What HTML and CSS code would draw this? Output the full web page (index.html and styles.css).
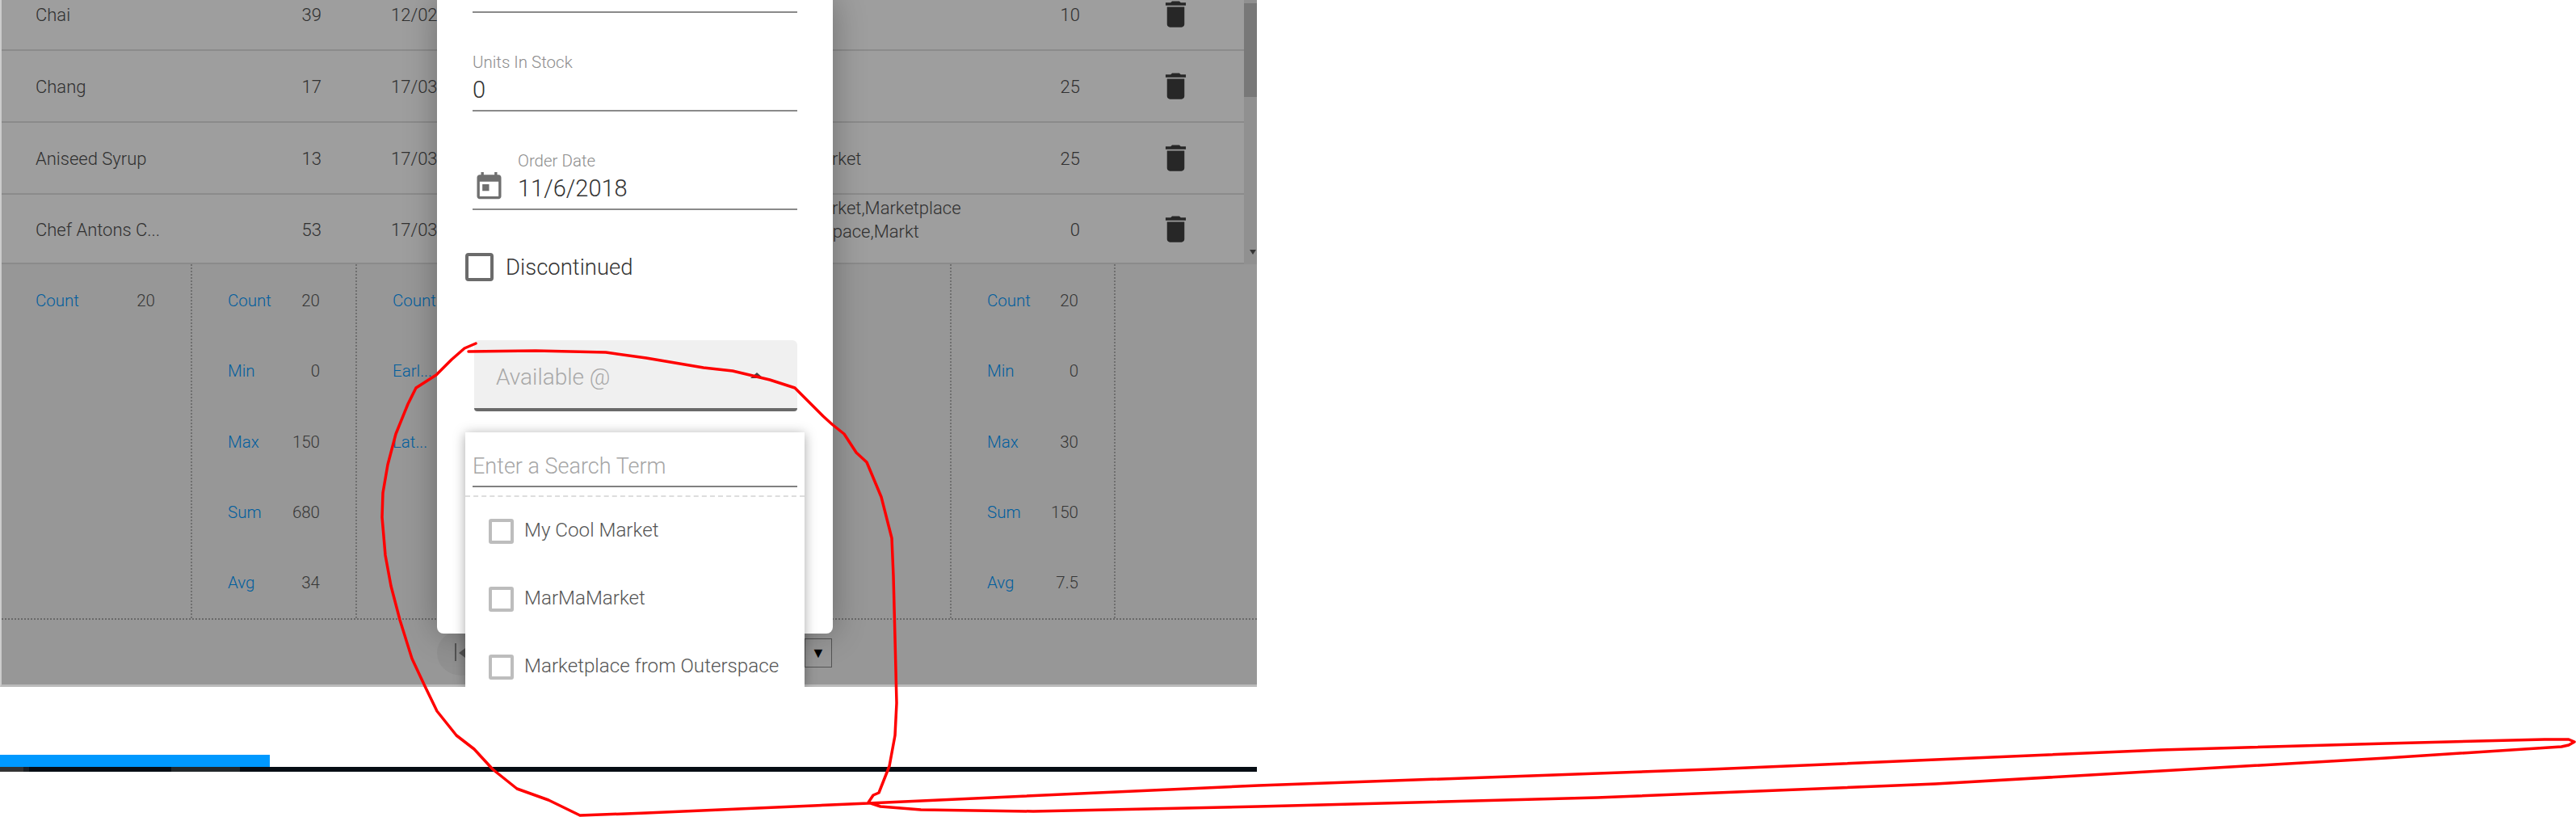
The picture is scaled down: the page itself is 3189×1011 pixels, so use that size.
FILE: index.html
```html
<!DOCTYPE html>
<html lang="en">
<head>
<meta charset="utf-8">
<title>Products</title>
<link rel="stylesheet" href="styles.css">
</head>
<body>
<div class="page">
  <section class="grid">
    <div class="rows">
      <div class="row"><span class="name">Chai</span><span class="num">39</span><span class="date">12/02/2018</span><span class="market"></span><span class="num">10</span><span class="del"><svg class="trash" viewBox="0 0 24 24"><path d="M6 19c0 1.1.9 2 2 2h8c1.1 0 2-.9 2-2V7H6v12zM19 4h-3.500l-1-1h-5l-1 1H5v2h14V4z"/></svg></span></div>
      <div class="row"><span class="name">Chang</span><span class="num">17</span><span class="date">17/03/2018</span><span class="market"></span><span class="num">25</span><span class="del"><svg class="trash" viewBox="0 0 24 24"><path d="M6 19c0 1.1.9 2 2 2h8c1.1 0 2-.9 2-2V7H6v12zM19 4h-3.500l-1-1h-5l-1 1H5v2h14V4z"/></svg></span></div>
      <div class="row"><span class="name">Aniseed Syrup</span><span class="num">13</span><span class="date">17/03/2018</span><span class="market">My Cool Market</span><span class="num">25</span><span class="del"><svg class="trash" viewBox="0 0 24 24"><path d="M6 19c0 1.1.9 2 2 2h8c1.1 0 2-.9 2-2V7H6v12zM19 4h-3.500l-1-1h-5l-1 1H5v2h14V4z"/></svg></span></div>
      <div class="row row-last"><span class="name">Chef Antons C...</span><span class="num">53</span><span class="date">17/03/2018</span><span class="market market-wrap">My Cool Market,Marketplace<br>from Outerspace,Markt</span><span class="num">0</span><span class="del"><svg class="trash" viewBox="0 0 24 24"><path d="M6 19c0 1.1.9 2 2 2h8c1.1 0 2-.9 2-2V7H6v12zM19 4h-3.500l-1-1h-5l-1 1H5v2h14V4z"/></svg></span></div>
    </div>
    <div class="totals">
      <div class="tcol tcol-name">
        <div class="stat"><a>Count</a><b>20</b></div>
      </div>
      <div class="tcol">
        <div class="stat"><a>Count</a><b>20</b></div>
        <div class="stat"><a>Min</a><b>0</b></div>
        <div class="stat"><a>Max</a><b>150</b></div>
        <div class="stat"><a>Sum</a><b>680</b></div>
        <div class="stat"><a>Avg</a><b>34</b></div>
      </div>
      <div class="tcol tcol-date">
        <div class="stat"><a>Count</a></div>
        <div class="stat"><a>Earl...</a></div>
        <div class="stat"><a>Lat...</a></div>
      </div>
      <div class="tcol">
        <div class="stat"><a>Count</a><b>20</b></div>
        <div class="stat"><a>Min</a><b>0</b></div>
        <div class="stat"><a>Max</a><b>30</b></div>
        <div class="stat"><a>Sum</a><b>150</b></div>
        <div class="stat"><a>Avg</a><b>7.5</b></div>
      </div>
      <div class="tcol tcol-end"></div>
    </div>
    <div class="pager">
      <button class="page-btn"><span class="first-bar"></span><span class="first-tri"></span></button>
      <span class="page-select">▼</span>
    </div>
    <div class="scrollbar"><div class="thumb"></div><span class="scroll-arrow"></span></div>
    <div class="backdrop"></div>
  </section>

  <div class="foot-bars">
    <div class="progress"></div>
    <div class="blackbar"><span class="seg seg-a"></span><span class="seg seg-b"></span><span class="seg seg-c"></span></div>
  </div>

  <form class="modal">
    <div class="field field-cut"></div>
    <div class="field">
      <label class="lbl">Units In Stock</label>
      <div class="val">0</div>
    </div>
    <div class="field field-date">
      <svg class="cal" viewBox="3 1 18 21"><path d="M19 3h-1V1h-2v2H8V1H6v2H5c-1.100 0-2 .9-2 2v14c0 1.100.9 2 2 2h14c1.100 0 2-.9 2-2V5c0-1.100-.9-2-2-2zm0 16H5V8h14v11zM7 10h5v5H7z"/></svg>
      <div class="date-body">
        <label class="lbl">Order Date</label>
        <div class="val">11/6/2018</div>
      </div>
    </div>
    <div class="check-row"><span class="check"></span><span class="check-text">Discontinued</span></div>
    <div class="select"><span class="select-text">Available @</span><span class="select-arrow"></span></div>
  </form>

  <div class="panel">
    <div class="search"><span class="search-text">Enter a Search Term</span></div>
    <div class="dash"></div>
    <div class="item"><span class="box"></span><span class="item-text">My Cool Market</span></div>
    <div class="item"><span class="box"></span><span class="item-text">MarMaMarket</span></div>
    <div class="item"><span class="box"></span><span class="item-text">Marketplace from Outerspace</span></div>
  </div>

  <svg class="scribble" viewBox="0 0 3189 1011" width="3189" height="1011">
    <path d="M589 425 L575 431 L559 445 L540 464 L515 480 L505 500 L490 537 L480 575 L474 610 L473 640 L477 687 L484 725 L495 767 L510 815 L525 847 L541 880 L565 910 L587 927 L610 952 L640 976 L679 990 L718 1009 L800 1006 L1075 994 L1558 972 L2117 952 L2675 928 L2954 920 L3150 915 L3180 915 L3187 918 L3180 922 L3171 924 L2954 938 L2396 970 L1977 987 L1558 998 L1279 1004 L1140 1002 L1090 998 L1075 993 L1081 984 L1088 981 L1101 948 L1108 910 L1110 870 L1108 790 L1106 713 L1104 666 L1091 615 L1073 572 L1060 560 L1045 537 L1030 525 L1019 515 L984 480 L953 470 L907 459 L871 455 L800 443 L750 436 L663 434 L580 435"/>
  </svg>
</div>
</body>
</html>
```
FILE: styles.css
```css
* { box-sizing: border-box; }
html, body { margin: 0; padding: 0; height: 1011px; overflow: hidden; background: #fff; }
body { font-family: Roboto, "Noto Sans", sans-serif; font-weight: 300; color: #333; }
.page { position: relative; width: 3189px; height: 1011px; overflow: hidden; }

.grid { position: relative; width: 1556px; height: 850px; overflow: hidden; background: #fff; border-left: 2px solid #ccc; border-bottom: 3px solid #bbb; }

.rows { margin-top: -26px; }
.row { display: grid; grid-template-columns: 236px 204px 433px 303px 203px 159px; height: 89px; padding-top: 2px; align-items: center; border-bottom: 2px solid #e0e0e0; font-size: 22px; line-height: 29px; color: #4e4e4e; }
.row-last { height: 86px; }
.name { padding-left: 42px; }
.num { text-align: right; padding-right: 44px; }
.date { padding-left: 42px; white-space: nowrap; }
.market { padding-left: 40px; white-space: nowrap; }
.market-wrap { margin-top: -24px; }
.del { display: flex; justify-content: center; padding-right: 10px; margin-top: -2px; }
.trash { width: 43px; height: 43px; fill: #404040; display: block; }

.totals { display: grid; grid-template-columns: 236px 204px 736px 203px 159px; height: 440px; background: #f4f4f4; border-bottom: 2px dotted #aaa; }
.tcol { padding: 2px 44px 0 44px; border-right: 2px dotted #b4b4b4; }
.tcol-name { padding-left: 42px; }
.tcol-end { border-right: 0; }
.stat { display: flex; justify-content: space-between; height: 87.300px; align-items: center; padding: 0; font-size: 20.500px; line-height: 29px; }
.stat a { color: #0099ff; }
.stat b { font-weight: 300; color: #595959; }
.tcol-date .stat { justify-content: flex-start; gap: 30px; }

.pager { display: flex; align-items: center; height: 81px; background: #f4f4f4; }
.page-btn { position: relative; width: 60px; height: 56px; margin-left: 539px; border: 0; padding: 0; background: #e9e9e9; border-radius: 50%; }
.first-bar { position: absolute; left: 22px; top: 16px; width: 2px; height: 22px; background: #888; }
.first-tri { position: absolute; left: 27px; top: 22px; border: 6px solid transparent; border-right: 8px solid #888; border-left: 0; }
.page-select { display: flex; align-items: center; justify-content: center; width: 34px; height: 36px; margin-left: 395px; border: 1px solid #888; font-size: 18px; color: #000; background: #f4f4f4; font-family: "DejaVu Sans", sans-serif; }

.scrollbar { position: absolute; right: 0; top: 0; width: 16px; height: 327px; background: #e8e8e8; }
.thumb { margin-top: 4px; height: 116px; background: #c2c2c2; }
.scroll-arrow { position: absolute; left: 7px; top: 309px; border: 4px solid transparent; border-top: 6px solid #555; border-bottom: 0; }

.backdrop { position: absolute; inset: 0; background: rgba(0, 0, 0, .38); }

.foot-bars { margin-top: 84px; width: 1556px; }
.progress { width: 334px; height: 15px; background: #0099ff; }
.blackbar { display: flex; height: 6px; background: #060d14; }
.seg-a { width: 29px; background: #333; }
.seg-b { width: 7px; margin-right: 176px; background: #1a1f24; }
.seg-c { width: 85px; background: #22272a; }

.modal { position: absolute; left: 541px; top: 0; width: 490px; height: 784px; padding: 0 44px; background: #fff; border-radius: 0 0 8px 8px; box-shadow: 0 0 40px rgba(0, 0, 0, .3); }
.field { border-bottom: 2px solid #8a8a8a; margin-top: 49px; }
.field-cut { height: 16px; margin-top: 0; }
.lbl { display: block; height: 24px; line-height: 24px; font-size: 20.500px; color: #8c8c8c; }
.val { height: 47px; padding-bottom: 3px; line-height: 44px; font-size: 29px; color: #333; }
.field-date { display: flex; align-items: flex-start; }
.cal { width: 33px; height: 35px; margin: 26px 19px 0 4px; fill: #6f6f6f; flex: none; }
.check-row { display: flex; align-items: center; height: 35px; margin: 53px 0 0 -9px; }
.check { width: 35px; height: 35px; border: 4px solid #6b6b6b; border-radius: 4px; }
.check-text { margin-left: 15px; font-size: 27.500px; color: #333; }
.select { position: relative; display: flex; align-items: center; width: 400px; height: 88px; margin: 73px 0 0 2px; padding: 6px 27px 0; background: #f0f0f0; border-bottom: 4px solid #6a6a6a; border-radius: 6px 6px 4px 4px; }
.select-text { font-size: 28px; color: #a8a8a8; }
.select-arrow { position: absolute; right: 42px; top: 40px; border: 8px solid transparent; border-bottom: 7px solid #444; border-top: 0; }

.panel { position: absolute; left: 576px; top: 535px; width: 420px; height: 315px; overflow: hidden; background: #fff; box-shadow: 0 2px 14px rgba(0, 0, 0, .35); clip-path: inset(-20px -20px 0 -20px); }
.search { margin: 0 9px; height: 68px; padding-top: 25px; border-bottom: 2px solid #808080; }
.search-text { font-size: 27px; line-height: 34px; color: #a6a6a6; display: block; }
.dash { margin-top: 10px; border-top: 2px dashed #ddd; }
.item { display: flex; align-items: center; height: 84px; padding-left: 29px; }
.box { width: 31px; height: 31px; border: 4px solid #bdbdbd; border-radius: 3px; flex: none; }
.item-text { margin-left: 13px; margin-top: -2px; font-size: 24.200px; color: #555; white-space: nowrap; }

.scribble { position: absolute; left: 0; top: 0; fill: none; stroke: #f00; stroke-width: 3.500; stroke-linejoin: round; stroke-linecap: round; pointer-events: none; }
```
